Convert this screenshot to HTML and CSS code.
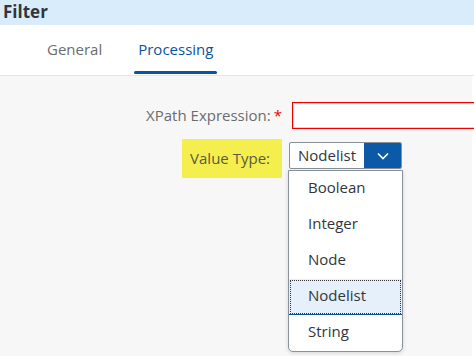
FILE: index.html
```html
<!DOCTYPE html>
<html>
<head>
  <title>Filter</title>
  <meta charset="utf-8">
  <link rel="stylesheet" href="styles.css">
</head>
<body>
  <div class="header">Filter</div>
  <div class="tabs">
    <div class="tab">General</div>
    <div class="tab active">Processing</div>
  </div>

  <div class="content">
    <div class="form">
      <label class="label">XPath Expression:<span class="req">*</span></label>
      <div class="field"><input class="input error" type="text"></div>

      <label class="label hl">Value Type:</label>
      <div class="field">
        <div class="select">
          <span class="select-value">Nodelist</span>
          <span class="select-btn">
            <svg width="14" height="14" viewBox="0 0 14 14"><path d="M2 4.5 L7 9.5 L12 4.5" fill="none" stroke="#fff" stroke-width="1.6"/></svg>
          </span>
        </div>
        <ul class="list">
          <li>Boolean</li>
          <li>Integer</li>
          <li>Node</li>
          <li class="selected">Nodelist</li>
          <li>String</li>
        </ul>
      </div>
    </div>
  </div>
</body>
</html>
```

FILE: styles.css
```css
* {box-sizing: border-box; margin: 0; padding: 0;}
body {font-family: 'Open Sans', sans-serif; color: #32363a; background: #fff; width: 474px; height: 356px; overflow: hidden;}

.header {height: 25px; background: #d8ecfb; font-size: 17px; font-weight: 700; padding-left: 3px; line-height: 23px; color: #32363a;}

.tabs {height: 51px; display: flex; padding-left: 47px; gap: 36px; border-bottom: 1px solid #e5e5e5; background: #fff;}
.tab {font-size: 15px; color: #6a6d70; line-height: 48px; position: relative;}
.tab.active {color: #0854a0;}
.tab.active::after {content: ''; position: absolute; left: -4px; right: -4px; bottom: 1px; height: 3px; border-radius: 2px; background: #0854a0;}

.content {background: #f7f7f7; height: 280px; padding-top: 26px; margin-right: 2px;}

.form {display: grid; grid-template-columns: 282px 1fr; column-gap: 7px; row-gap: 10px; align-items: start;}
.label {font-size: 15px; color: #6a6d70; text-align: right; line-height: 27px;}
.req {color: #e00; margin-left: 3px;}
.label.hl {justify-self: end; background: #f4ef4f; color: #5a5b3c; height: 39px; line-height: 39px; padding: 0 12px 0 8px;}

.field {position: relative;}
.input {display: block; width: 200px; height: 27px; margin-left: 3px; border: 1px solid #e00; box-shadow: inset 0 0 0 1px #f6c8c8; background: #fff; outline: none;}

.select {display: flex; width: 113px; height: 27px; margin-top: 3px; border: 1px solid #89919a; border-radius: 2px; background: #fff; overflow: hidden;}
.select-value {flex: 1; font-size: 15px; line-height: 25px; padding-left: 8px;}
.select-btn {width: 37px; background: #0a5aa8; display: flex; align-items: center; justify-content: center;}

.list {position: absolute; left: -1px; top: 31px; width: 115px; list-style: none; background: #fff; border: 1px solid #89919a; border-radius: 0 0 5px 5px; box-shadow: 0 1px 4px rgba(0,0,0,0.15);}
.list li {height: 36px; line-height: 33px; font-size: 15px; padding-left: 19px;}
.list li.selected {background: #e5f0fa; outline: 1px dotted #32363a; outline-offset: -2px; border-bottom: 1px solid #0854a0;}
```
